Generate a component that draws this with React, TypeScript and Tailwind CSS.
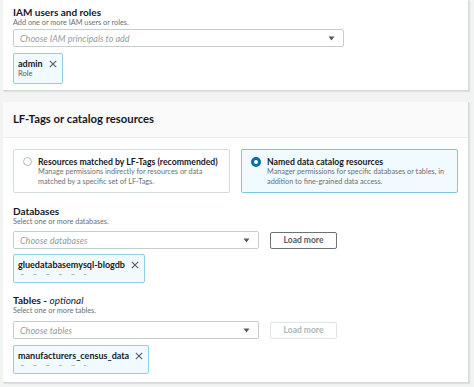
import React from 'react';

const FONT = "font-['Lato','Open_Sans',sans-serif]";

function Caret() {
  return (
    <svg width="7" height="5" viewBox="0 0 7 5" className="shrink-0">
      <path d="M0.5 0.5 L6.5 0.5 L3.5 4.5 Z" fill="#545b64" />
    </svg>
  );
}

function CloseIcon() {
  return (
    <svg width="8" height="8" viewBox="0 0 8 8" className="shrink-0">
      <path d="M0.8 0.8 L7.2 7.2 M7.2 0.8 L0.8 7.2" stroke="#545b64" strokeWidth="1.1" fill="none" />
    </svg>
  );
}

function Select({ placeholder, width }: { placeholder: string; width: string }) {
  return (
    <div
      className={`${width} h-[18px] flex items-center justify-between border border-[#c6cdce] rounded-[2px] bg-white pl-[6px] pr-[8px]`}
    >
      <span className="text-[9px] italic text-[#95a0a1] leading-none whitespace-nowrap">{placeholder}</span>
      <Caret />
    </div>
  );
}

function Token({ name, sub, dashed }: { name: string; sub?: string; dashed?: boolean }) {
  return (
    <div className="inline-flex items-start self-start gap-[6px] border border-[#8fd0e2] bg-[#f1faff] rounded-[2px] pl-[4px] pr-[5px] pt-[4px] pb-[4px]">
      <div className="flex flex-col">
        <span className="text-[9px] leading-[11px] font-bold text-[#16191f] whitespace-nowrap">{name}</span>
        {sub && <span className="text-[7.5px] leading-[10px] text-[#545b64]">{sub}</span>}
        {dashed && (
          <span className="text-[8px] leading-[8px] text-[#7d8788] pl-[2px] tracking-[3px] whitespace-nowrap">
            – – – – – -
          </span>
        )}
      </div>
      <div className="pt-[2px]">
        <CloseIcon />
      </div>
    </div>
  );
}

function LoadMore({ disabled }: { disabled?: boolean }) {
  return (
    <div
      className={`w-[67px] h-[17px] flex items-center justify-center rounded-[2px] border text-[8.5px] font-bold ${
        disabled ? 'border-[#dfe4e4] text-[#aab7b8]' : 'border-[#6b7278] text-[#545b64]'
      }`}
    >
      Load more
    </div>
  );
}

function RadioCard({
  title,
  desc,
  selected,
}: {
  title: string;
  desc: string[];
  selected?: boolean;
}) {
  return (
    <div
      className={`flex items-start gap-[6px] h-[44px] rounded-[2px] border pl-[9px] pt-[6px] ${
        selected ? 'border-[#7cc7dd] bg-[#f1faff]' : 'border-[#d5dbdb] bg-white'
      }`}
    >
      <div className="pt-[1px]">
        {selected ? (
          <div className="w-[10px] h-[10px] rounded-full border-[3px] border-[#0a6bb0] bg-white" />
        ) : (
          <div className="w-[9px] h-[9px] rounded-full border border-[#b3bcbd] bg-white" />
        )}
      </div>
      <div className="flex flex-col">
        <span className="text-[8.7px] leading-[11px] font-bold text-[#16191f] whitespace-nowrap">{title}</span>
        {desc.map((d) => (
          <span key={d} className="text-[7.3px] leading-[10px] text-[#687078] whitespace-nowrap">
            {d}
          </span>
        ))}
      </div>
    </div>
  );
}

export default function App() {
  return (
    <div className={`${FONT} w-[474px] h-[387px] overflow-hidden bg-[#f2f3f3] pl-[3px] pr-[5px]`}>
      {/* IAM principals */}
      <div className="h-[91px] bg-white border-b border-r border-[#d5dbdb] shadow-[1px_1px_1px_rgba(0,0,0,0.08)] flex flex-col px-[10px] pt-[7px]">
        <span className="text-[10px] leading-[11px] font-bold text-[#16191f]">IAM users and roles</span>
        <span className="text-[7.3px] leading-[10px] text-[#687078]">Add one or more IAM users or roles.</span>
        <div className="mt-[1px]">
          <Select placeholder="Choose IAM principals to add" width="w-[331px]" />
        </div>
        <div className="mt-[6px] flex">
          <Token name="admin" sub="Role" />
        </div>
      </div>

      {/* LF-Tags or catalog resources */}
      <div className="mt-[11px] h-[281px] bg-white border-b border-r border-[#d5dbdb] shadow-[1px_1px_1px_rgba(0,0,0,0.08)] flex flex-col">
        <div className="h-[36px] bg-[#fafafa] border-b border-[#eaeded] flex items-center px-[10px]">
          <span className="text-[11.3px] font-bold text-[#16191f]">LF-Tags or catalog resources</span>
        </div>
        <div className="flex flex-col px-[10px] pt-[11px]">
          <div className="grid grid-cols-2 gap-[11px]">
            <RadioCard
              title="Resources matched by LF-Tags (recommended)"
              desc={['Manage permissions indirectly for resources or data', 'matched by a specific set of LF-Tags.']}
            />
            <RadioCard
              selected
              title="Named data catalog resources"
              desc={['Manager permissions for specific databases or tables, in', 'addition to fine-grained data access.']}
            />
          </div>

          <span className="mt-[13px] text-[10px] leading-[11px] font-bold text-[#16191f]">Databases</span>
          <span className="text-[7.3px] leading-[10px] text-[#687078]">Select one or more databases.</span>
          <div className="mt-[4px] flex items-center gap-[11px]">
            <Select placeholder="Choose databases" width="w-[246px]" />
            <LoadMore />
          </div>
          <div className="mt-[5px] flex">
            <Token name="gluedatabasemysql-blogdb" dashed />
          </div>

          <span className="mt-[12px] text-[10px] leading-[11px] font-bold text-[#16191f]">
            Tables - <span className="italic font-normal">optional</span>
          </span>
          <span className="text-[7.3px] leading-[10px] text-[#687078]">Select one or more tables.</span>
          <div className="mt-[5px] flex items-center gap-[11px]">
            <Select placeholder="Choose tables" width="w-[246px]" />
            <LoadMore disabled />
          </div>
          <div className="mt-[6px] flex">
            <Token name="manufacturers_census_data" dashed />
          </div>
        </div>
      </div>
    </div>
  );
}
